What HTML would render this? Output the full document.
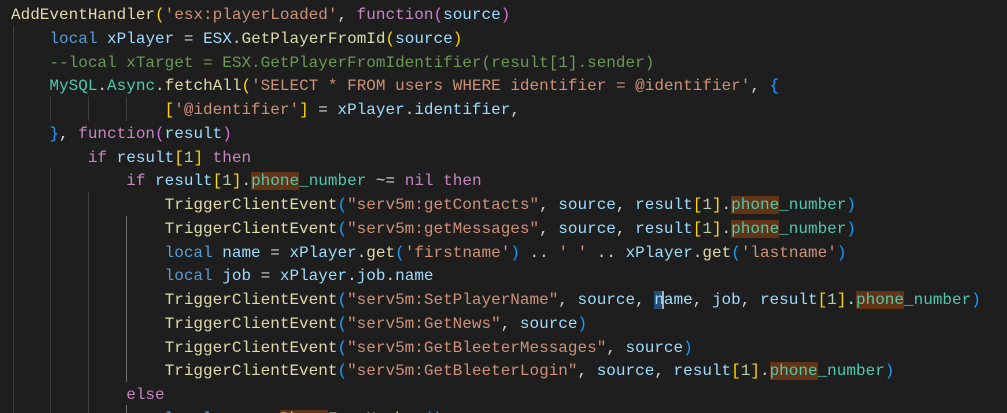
<!DOCTYPE html>
<html><head><meta charset="utf-8"><style>
html,body{margin:0;padding:0;background:#1e1e1e;width:1007px;height:413px;overflow:hidden}
#c{position:relative;width:1007px;height:413px;font-family:"Liberation Mono",monospace;font-size:16px;line-height:23.75px;color:#d4d4d4;padding-top:4px;box-sizing:border-box;overflow:hidden}
.l{padding-left:11px;height:23.75px;white-space:pre}
.f{color:#dcdcaa}.v{color:#9cdcfe}.k{color:#c586c0}.b{color:#569cd6}.s{color:#ce9178}.c{color:#6a9955}.t{color:#4ec9b0}.n{color:#b5cea8}
.y{color:#ffd700}.p{color:#da70d6}.u{color:#179fff}
.h{background:#623315}
.g{position:absolute;width:1px;background:#404040}
</style></head><body><div id="c"><div class="g" style="left:13px;top:26px;height:390px"></div><div class="g" style="left:50px;top:97px;height:24px"></div><div class="g" style="left:88px;top:97px;height:24px"></div><div class="g" style="left:126px;top:97px;height:24px"></div><div class="g" style="left:50px;top:168px;height:250px"></div><div class="g" style="left:88px;top:192px;height:230px"></div><div class="g" style="left:126px;top:216px;height:166px;background:#707070"></div><div class="g" style="left:126px;top:405px;height:10px;background:#707070"></div>
<div class="l"><span class="f">AddEventHandler</span><span class="y">(</span><span class="s">'esx:playerLoaded'</span>, <span class="k">function</span><span class="p">(</span><span class="v">source</span><span class="p">)</span></div>
<div class="l">    <span class="b">local</span> <span class="v">xPlayer</span> = <span class="v">ESX</span>.<span class="f">GetPlayerFromId</span><span class="y">(</span><span class="v">source</span><span class="y">)</span></div>
<div class="l">    <span class="c">--local xTarget = ESX.GetPlayerFromIdentifier(result[1].sender)</span></div>
<div class="l">    <span class="t">MySQL</span>.<span class="t">Async</span>.<span class="f">fetchAll</span><span class="y">(</span><span class="s">'SELECT * FROM users WHERE identifier = @identifier'</span>, <span class="u">{</span></div>
<div class="l">                <span class="y">[</span><span class="s">'@identifier'</span><span class="y">]</span> = <span class="v">xPlayer</span>.<span class="v">identifier</span>,</div>
<div class="l">    <span class="u">}</span>, <span class="k">function</span><span class="p">(</span><span class="v">result</span><span class="p">)</span></div>
<div class="l">        <span class="k">if</span> <span class="v">result</span><span class="y">[</span><span class="n">1</span><span class="y">]</span> <span class="k">then</span></div>
<div class="l">            <span class="k">if</span> <span class="v">result</span><span class="y">[</span><span class="n">1</span><span class="y">]</span>.<span class="t"><span class="h">phone</span>_number</span> ~= <span class="k">nil</span> <span class="k">then</span></div>
<div class="l">                <span class="f">TriggerClientEvent</span><span class="u">(</span><span class="s">"serv5m:getContacts"</span>, <span class="v">source</span>, <span class="v">result</span><span class="y">[</span><span class="n">1</span><span class="y">]</span>.<span class="t"><span class="h">phone</span>_number</span><span class="u">)</span></div>
<div class="l">                <span class="f">TriggerClientEvent</span><span class="u">(</span><span class="s">"serv5m:getMessages"</span>, <span class="v">source</span>, <span class="v">result</span><span class="y">[</span><span class="n">1</span><span class="y">]</span>.<span class="t"><span class="h">phone</span>_number</span><span class="u">)</span></div>
<div class="l">                <span class="b">local</span> <span class="v">name</span> = <span class="v">xPlayer</span>.<span class="f">get</span><span class="u">(</span><span class="s">'firstname'</span><span class="u">)</span> .. <span class="s">' '</span> .. <span class="v">xPlayer</span>.<span class="f">get</span><span class="u">(</span><span class="s">'lastname'</span><span class="u">)</span></div>
<div class="l">                <span class="b">local</span> <span class="v">job</span> = <span class="v">xPlayer</span>.<span class="v">job</span>.<span class="v">name</span></div>
<div class="l">                <span class="f">TriggerClientEvent</span><span class="u">(</span><span class="s">"serv5m:SetPlayerName"</span>, <span class="v">source</span>, <span class="v"><span style="background:#264f78;box-shadow:inset -2px 0 0 #aeafad">n</span>ame</span>, <span class="v">job</span>, <span class="v">result</span><span class="y">[</span><span class="n">1</span><span class="y">]</span>.<span class="t"><span class="h">phone</span>_number</span><span class="u">)</span></div>
<div class="l">                <span class="f">TriggerClientEvent</span><span class="u">(</span><span class="s">"serv5m:GetNews"</span>, <span class="v">source</span><span class="u">)</span></div>
<div class="l">                <span class="f">TriggerClientEvent</span><span class="u">(</span><span class="s">"serv5m:GetBleeterMessages"</span>, <span class="v">source</span><span class="u">)</span></div>
<div class="l">                <span class="f">TriggerClientEvent</span><span class="u">(</span><span class="s">"serv5m:GetBleeterLogin"</span>, <span class="v">source</span>, <span class="v">result</span><span class="y">[</span><span class="n">1</span><span class="y">]</span>.<span class="t"><span class="h">phone</span>_number</span><span class="u">)</span></div>
<div class="l">            <span class="k">else</span></div>
<div class="l">                <span class="b">local</span> <span class="v">a</span> = <span class="f">my<span class="h">Phone</span>FromNumber</span><span class="u">()</span></div>
</div></body></html>
